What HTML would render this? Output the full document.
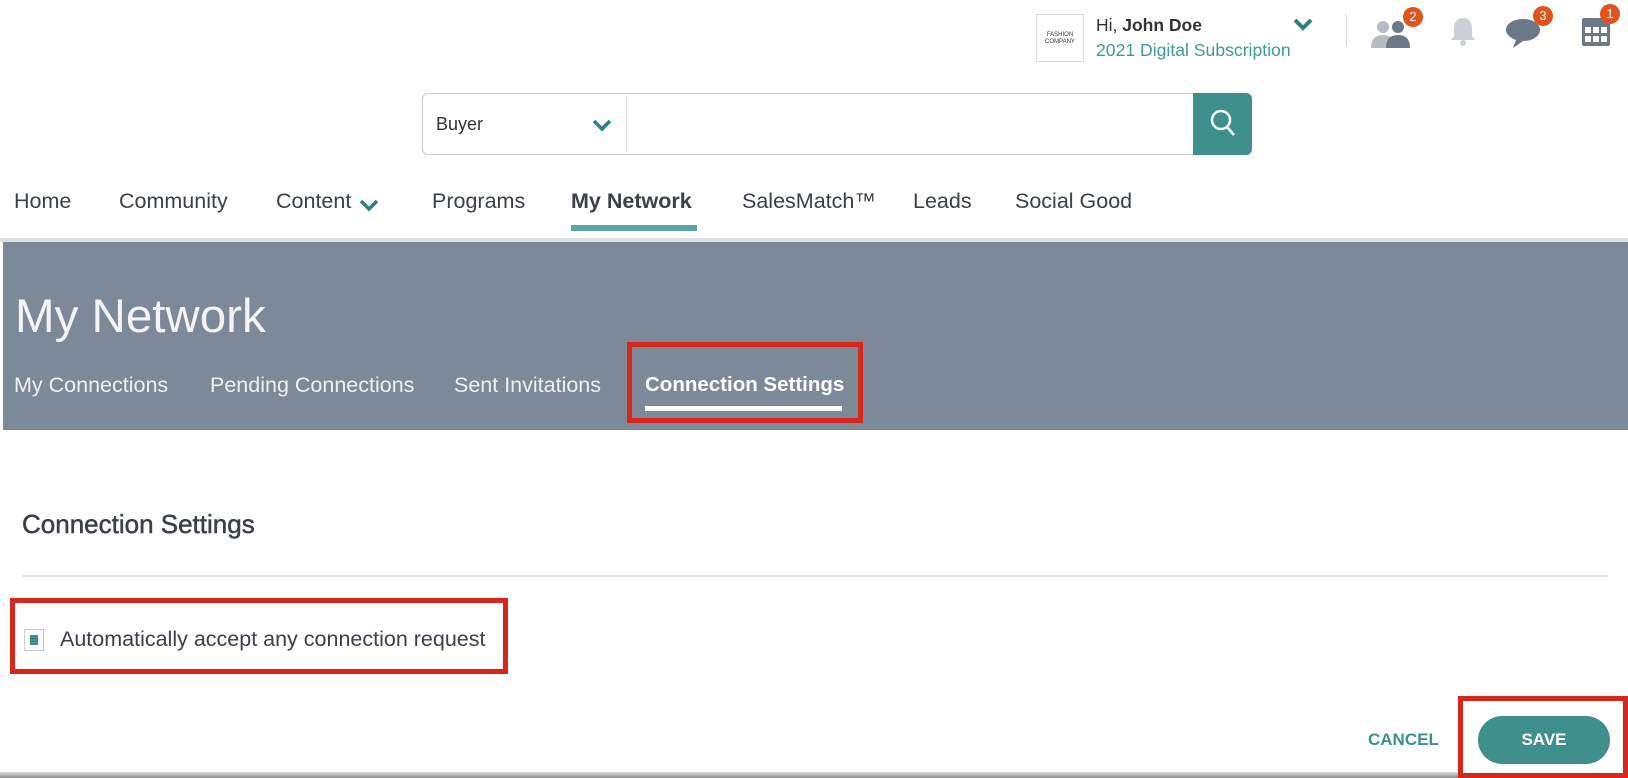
<!DOCTYPE html>
<html><head><style>
body{margin:0;width:1628px;height:778px;background:#fff;font-family:"Liberation Sans",sans-serif;position:relative;overflow:hidden}
.a{position:absolute;white-space:nowrap}
.nav{top:189px;font-size:21.5px;color:#3a3f4a}
.sub{top:373px;font-size:21.5px;color:#eef1f4}
.box{position:absolute;border:5px solid #d9261c;box-sizing:border-box}
.badge{position:absolute;width:20px;height:20px;border-radius:50%;background:#e0541c;color:#fff;font-size:13px;text-align:center;line-height:20px}
</style></head><body>
<!-- header -->
<div class="a" style="left:1036px;top:14px;width:48px;height:48px;border:1px solid #ddd;box-sizing:border-box;font-size:6px;color:#333;text-align:center;line-height:7px;padding-top:17px">FASHION<br>COMPANY</div>
<div class="a" style="left:1096px;top:15px;font-size:17.5px;color:#333">Hi, <b>John Doe</b></div>
<div class="a" style="left:1096px;top:40px;font-size:17.6px;color:#3e9a98">2021 Digital Subscription</div>
<svg class="a" style="left:1293px;top:17px" width="20" height="14"><path d="M2 3l8 8 8-8" stroke="#2f7f7e" stroke-width="4" fill="none"/></svg>
<div class="a" style="left:1346px;top:14px;width:1px;height:32px;background:#ddd"></div>
<svg class="a" style="left:1370px;top:18px" width="48" height="30"><circle cx="13" cy="9" r="6" fill="#b5bcc3"/><path d="M1 30q0-13 12-13t12 13z" fill="#b5bcc3"/><circle cx="28" cy="9" r="6" fill="#6b7888"/><path d="M16 30q0-13 12-13t12 13z" fill="#6b7888"/></svg>
<div class="badge" style="left:1403px;top:7px">2</div>
<svg class="a" style="left:1448px;top:15px" width="30" height="32"><path d="M15 3c-6 0-9 4-9 10v8l-3 4h24l-3-4v-8c0-6-3-10-9-10z" fill="#ccd0d4"/><circle cx="15" cy="28" r="3" fill="#ccd0d4"/></svg>
<svg class="a" style="left:1505px;top:15px" width="40" height="34"><path d="M18 4c10 0 17 5 17 11s-7 11-17 11l-10 7 3-8c-6-2-10-6-10-10 0-6 7-11 17-11z" fill="#6b7888"/></svg>
<div class="badge" style="left:1533px;top:6px">3</div>
<svg class="a" style="left:1580px;top:12px" width="32" height="36"><rect x="2" y="6" width="28" height="28" rx="2" fill="#6b7888"/><g fill="#fff"><rect x="5" y="15" width="6" height="6"/><rect x="13" y="15" width="6" height="6"/><rect x="21" y="15" width="6" height="6"/><rect x="5" y="24" width="6" height="6"/><rect x="13" y="24" width="6" height="6"/><rect x="21" y="24" width="6" height="6"/></g></svg>
<div class="badge" style="left:1600px;top:4px">1</div>
<!-- search -->
<div class="a" style="left:422px;top:93px;width:830px;height:62px;border:1px solid #ccc;border-radius:6px;box-sizing:border-box"></div>
<div class="a" style="left:436px;top:114px;font-size:18px;color:#333">Buyer</div>
<svg class="a" style="left:592px;top:118px" width="20" height="14"><path d="M2 3l8 8 8-8" stroke="#2f7f7e" stroke-width="3.5" fill="none"/></svg>
<div class="a" style="left:626px;top:96px;width:1px;height:56px;background:#ddd"></div>
<div class="a" style="left:1193px;top:93px;width:59px;height:62px;background:#3f8f8c;border-radius:0 6px 6px 0"></div>
<svg class="a" style="left:1209px;top:108px" width="28" height="32"><circle cx="12" cy="12" r="9" stroke="#fff" stroke-width="2.5" fill="none"/><path d="M18 19l7 8" stroke="#fff" stroke-width="2.5"/></svg>
<!-- nav -->
<div class="a nav" style="left:14px">Home</div>
<div class="a nav" style="left:119px">Community</div>
<div class="a nav" style="left:276px">Content</div>
<svg class="a" style="left:359px;top:198px" width="20" height="14"><path d="M2 3l8 8 8-8" stroke="#2f7f7e" stroke-width="3.5" fill="none"/></svg>
<div class="a nav" style="left:571px;font-weight:bold">My Network</div>
<div class="a nav" style="left:432px">Programs</div>
<div class="a" style="left:571px;top:225px;width:126px;height:6px;background:#5aa6a1"></div>
<div class="a nav" style="left:742px">SalesMatch™</div>
<div class="a nav" style="left:913px">Leads</div>
<div class="a nav" style="left:1015px">Social Good</div>
<!-- banner -->
<div class="a" style="left:0;top:238px;width:1628px;height:4px;background:#dfe2e5"></div>
<div class="a" style="left:3px;top:242px;width:1625px;height:188px;background:#7b8999"></div>
<div class="a" style="left:15px;top:289px;font-size:47.5px;color:#f2f4f6">My Network</div>
<div class="a sub" style="left:14px">My Connections</div>
<div class="a sub" style="left:210px">Pending Connections</div>
<div class="a sub" style="left:454px">Sent Invitations</div>
<div class="a sub" style="left:645px;font-weight:bold;color:#fff;font-size:20.5px">Connection Settings</div>
<div class="a" style="left:645px;top:406px;width:197px;height:5px;background:#fff"></div>
<div class="box" style="left:627px;top:342px;width:236px;height:81px"></div>
<!-- content -->
<div class="a" style="left:22px;top:509px;font-size:26px;color:#3a3f4a;-webkit-text-stroke:0.5px #3a3f4a">Connection Settings</div>
<div class="a" style="left:22px;top:575px;width:1586px;height:2px;background:#e3e5e7"></div>
<div class="a" style="left:24px;top:629px;width:20px;height:22px;border:1px solid #ccc;box-sizing:border-box"></div>
<div class="a" style="left:30px;top:635px;width:8px;height:10px;background:#3f8f8c"></div>
<div class="a" style="left:60px;top:627px;font-size:21.5px;color:#3a3f4a">Automatically accept any connection request</div>
<div class="box" style="left:10px;top:598px;width:498px;height:76px"></div>
<div class="a" style="left:1368px;top:730px;font-size:17px;color:#3f8f8c;font-weight:bold">CANCEL</div>
<div class="a" style="left:1478px;top:716px;width:132px;height:48px;border-radius:24px;background:#3f8f8c;color:#fff;font-size:17px;font-weight:bold;text-align:center;line-height:48px">SAVE</div>
<div class="box" style="left:1458px;top:696px;width:170px;height:82px"></div>
<div class="a" style="left:0;top:772px;width:1458px;height:6px;background:linear-gradient(#ddd,#888)"></div>
</body></html>
